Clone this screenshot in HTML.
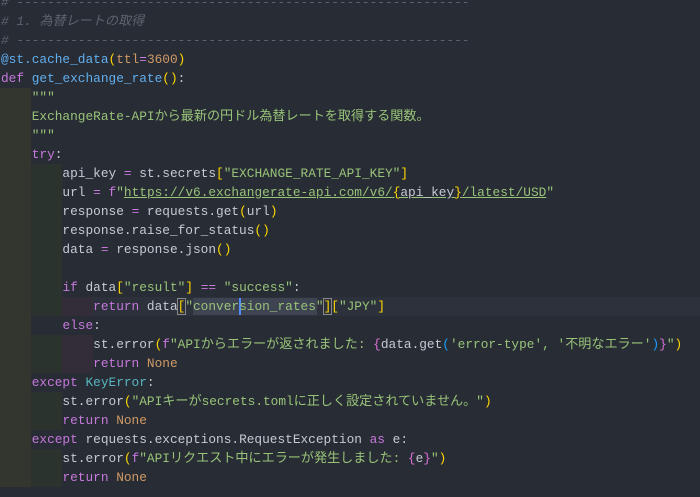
<!DOCTYPE html>
<html><head><meta charset="utf-8"><style>
html,body{margin:0;padding:0;background:#282c34;width:700px;height:497px;overflow:hidden}
.l{position:absolute;left:1px;height:19px;line-height:19px;white-space:pre;font-family:"Liberation Mono","Noto Sans CJK JP",monospace;font-size:12.8px;color:#c5cad3;font-variant-ligatures:none}
.b{position:absolute;height:19px}
.c{color:#5c6370;font-style:italic}
.k{color:#c678dd}.f{color:#61afef}.s{color:#98c379}.o{color:#d19a66}
.y{color:#ffd700}.p{color:#da70d6}.u{color:#179fff}.t{color:#56b6c2}
.j{font-family:"Noto Sans CJK JP",sans-serif;font-size:13.1px;line-height:0}
</style></head><body>
<div class="b" style="left:0;top:88px;width:31px;height:399px;background:#33362e"></div>
<div class="b" style="left:31px;top:164px;width:31px;height:114px;background:#2b332f"></div>
<div class="b" style="left:31px;top:278px;width:31px;height:19px;background:#2b332f"></div>
<div class="b" style="left:31px;top:297px;width:31px;height:19px;background:#2b332f"></div>
<div class="b" style="left:31px;top:335px;width:31px;height:38px;background:#2b332f"></div>
<div class="b" style="left:31px;top:392px;width:31px;height:38px;background:#2b332f"></div>
<div class="b" style="left:31px;top:449px;width:31px;height:38px;background:#2b332f"></div>
<div class="b" style="left:62px;top:297px;width:31px;height:19px;background:#322d38"></div>
<div class="b" style="left:62px;top:335px;width:31px;height:38px;background:#322d38"></div>
<div class="b" style="left:93px;top:297px;width:607px;height:19px;background:#2c313c"></div>
<div class="b" style="left:193px;top:298px;width:124px;height:17px;background:#3e4451"></div>
<div class="b" style="left:239px;top:298px;width:2px;height:17px;background:#528bff"></div>

<div class="l c" style="top:-7px"># -----------------------------------------------------------</div>
<div class="l c" style="top:12px"># 1. <span class="j">為替レートの取得</span></div>
<div class="l c" style="top:31px"># -----------------------------------------------------------</div>
<div class="l" style="top:50px"><span class="f">@st.cache_data</span><span class="y">(</span><span class="o">ttl</span><span class="k">=</span><span class="o">3600</span><span class="y">)</span></div>
<div class="l" style="top:69px"><span class="k">def</span> <span class="f">get_exchange_rate</span><span class="y">()</span>:</div>
<div class="l s" style="top:88px">    """</div>
<div class="l s" style="top:107px">    ExchangeRate-API<span class="j">から最新の円ドル為替レートを取得する関数。</span></div>
<div class="l s" style="top:126px">    """</div>
<div class="l" style="top:145px">    <span class="k">try</span>:</div>
<div class="l" style="top:164px">        api_key <span class="k">=</span> st.secrets<span class="y">[</span><span class="s">"EXCHANGE_RATE_API_KEY"</span><span class="y">]</span></div>
<div class="l" style="top:183px">        url <span class="k">=</span> <span class="k">f</span><span class="s">"<span style="text-decoration:underline">https://v6.exchangerate-api.com/v6/<span class="y">{</span><span style="color:#c5cad3">api_key</span><span class="y">}</span>/latest/USD</span>"</span></div>
<div class="l" style="top:202px">        response <span class="k">=</span> requests.get<span class="y">(</span>url<span class="y">)</span></div>
<div class="l" style="top:221px">        response.raise_for_status<span class="y">()</span></div>
<div class="l" style="top:240px">        data <span class="k">=</span> response.json<span class="y">()</span></div>
<div class="l" style="top:278px">        <span class="k">if</span> data<span class="y">[</span><span class="s">"result"</span><span class="y">]</span> <span class="k">==</span> <span class="s">"success"</span>:</div>
<div class="l" style="top:297px">            <span class="k">return</span> data<span class="y" style="outline:1px solid #888">[</span><span class="s">"conversion_rates"</span><span class="y" style="outline:1px solid #888">]</span><span class="y">[</span><span class="s">"JPY"</span><span class="y">]</span></div>
<div class="l" style="top:316px">        <span class="k">else</span>:</div>
<div class="l" style="top:335px">            st.error<span class="y">(</span><span class="k">f</span><span class="s">"API<span class="j">からエラーが返されました</span>: <span class="p">{</span><span style="color:#c5cad3">data.get</span><span class="u">(</span>'error-type', '<span class="j">不明なエラー</span>'<span class="u">)</span><span class="p">}</span>"</span><span class="y">)</span></div>
<div class="l" style="top:354px">            <span class="k">return</span> <span class="o">None</span></div>
<div class="l" style="top:373px">    <span class="k">except</span> <span class="t">KeyError</span>:</div>
<div class="l" style="top:392px">        st.error<span class="y">(</span><span class="s">"API<span class="j">キーが</span>secrets.toml<span class="j">に正しく設定されていません。</span>"</span><span class="y">)</span></div>
<div class="l" style="top:411px">        <span class="k">return</span> <span class="o">None</span></div>
<div class="l" style="top:430px">    <span class="k">except</span> requests.exceptions.RequestException <span class="k">as</span> e:</div>
<div class="l" style="top:449px">        st.error<span class="y">(</span><span class="k">f</span><span class="s">"API<span class="j">リクエスト中にエラーが発生しました</span>: <span class="p">{</span><span style="color:#c5cad3">e</span><span class="p">}</span>"</span><span class="y">)</span></div>
<div class="l" style="top:468px">        <span class="k">return</span> <span class="o">None</span></div>
</body></html>
